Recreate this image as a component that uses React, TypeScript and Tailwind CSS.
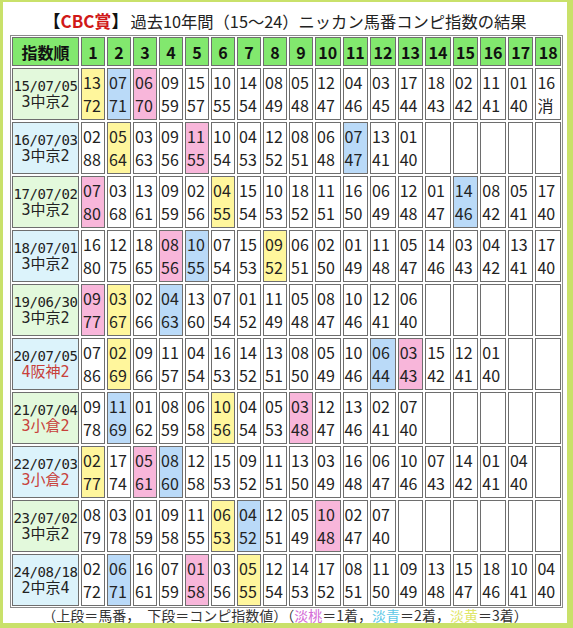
type Race = {
  date: string;
  venue: string;
  redVenue?: boolean;
  top: string;
  bot: string;
  p: number; // 1着 column
  b: number; // 2着 column
  y: number; // 3着 column
};

const races: Race[] = [
  { date: "15/07/05", venue: "3中京2", top: "13 07 06 09 15 10 14 08 05 12 04 03 17 18 02 11 01 16", bot: "72 71 70 59 57 55 54 49 48 47 46 45 44 43 42 41 40 消", p: 3, b: 2, y: 1 },
  { date: "16/07/03", venue: "3中京2", top: "02 05 03 09 11 10 04 12 08 06 07 13 01", bot: "88 64 63 56 55 54 53 52 51 48 47 41 40", p: 5, b: 11, y: 2 },
  { date: "17/07/02", venue: "3中京2", top: "07 03 13 09 02 04 15 10 18 11 16 06 12 01 14 08 05 17", bot: "80 68 61 59 56 55 54 53 52 51 50 49 48 47 46 42 41 40", p: 1, b: 15, y: 6 },
  { date: "18/07/01", venue: "3中京2", top: "16 12 18 08 10 07 15 09 06 02 01 11 05 14 03 04 13 17", bot: "80 75 65 56 55 54 53 52 51 50 49 48 47 46 43 42 41 40", p: 4, b: 5, y: 8 },
  { date: "19/06/30", venue: "3中京2", top: "09 03 02 04 13 07 01 11 05 08 10 12 06", bot: "77 67 66 63 60 54 52 49 48 47 46 41 40", p: 1, b: 4, y: 2 },
  { date: "20/07/05", venue: "4阪神2", redVenue: true, top: "07 02 09 11 04 16 14 13 08 05 10 06 03 15 12 01", bot: "86 69 66 57 54 53 52 51 50 49 46 44 43 42 41 40", p: 13, b: 12, y: 2 },
  { date: "21/07/04", venue: "3小倉2", redVenue: true, top: "09 11 01 08 06 10 04 05 03 12 13 02 07", bot: "78 69 62 59 58 56 54 53 48 47 46 41 40", p: 9, b: 2, y: 6 },
  { date: "22/07/03", venue: "3小倉2", redVenue: true, top: "02 17 05 08 12 15 09 11 13 03 16 06 10 07 14 01 04", bot: "77 74 61 60 58 53 52 51 50 49 48 47 46 43 42 41 40", p: 3, b: 4, y: 1 },
  { date: "23/07/02", venue: "3中京2", top: "08 03 01 09 11 06 04 12 05 10 02 07", bot: "79 78 59 58 55 53 52 51 49 48 47 40", p: 10, b: 7, y: 6 },
  { date: "24/08/18", venue: "2中京4", top: "02 06 16 07 01 03 05 12 14 17 08 11 09 13 15 18 10 04", bot: "72 71 61 59 58 56 55 54 53 52 51 50 49 48 47 46 41 40", p: 5, b: 2, y: 7 },
];

const cols = Array.from({ length: 18 }, (_, i) => i + 1);

function cellBg(r: Race, c: number) {
  if (c === r.p) return "bg-[#f8b6da]";
  if (c === r.b) return "bg-[#badaf8]";
  if (c === r.y) return "bg-[#fff69c]";
  return "bg-white";
}

export default function App() {
  return (
    <div className="w-[573px] h-[628px] bg-white border-[#c9e16a] border-t-2 border-l-[3px] border-r-[6px] border-b-[5px] font-['Noto_Sans_CJK_JP',sans-serif] text-[#222]">
      {/* title */}
      <div className="h-[33px] flex items-center justify-center pt-[5px] leading-[20px]">
        <span className="font-bold text-[17px] text-[#111]">【</span>
        <span className="font-bold text-[17px] text-[#d01818]">CBC賞</span>
        <span className="font-bold text-[17px] text-[#111] mr-[2px]">】</span>
        <span className="text-[16.3px]">過去10年間（15～24）ニッカン馬番コンピ指数の結果</span>
      </div>

      {/* table */}
      <div className="ml-[7px] w-[553px] border border-[#8a8a8a] p-px">
        <div className="grid grid-cols-[67px_repeat(9,24px)_repeat(9,minmax(0,1fr))] grid-rows-[29px_repeat(10,52px)] gap-[2px]">
          <div className="border border-[#6e6e6e] bg-[#82e86e] flex items-center justify-center font-bold text-[16px] text-[#111]">
            指数順
          </div>
          {cols.map((c) => (
            <div
              key={c}
              className="border border-[#6e6e6e] bg-[#82e86e] flex items-center justify-center font-bold text-[16px] text-[#111]"
            >
              {c}
            </div>
          ))}

          {races.map((r, ri) => {
            const top = r.top.split(" ");
            const bot = r.bot.split(" ");
            return [
              <div
                key={r.date}
                className={`border border-[#6e6e6e] flex flex-col items-center justify-center font-['DejaVu_Sans_Mono','Noto_Sans_CJK_JP',monospace] ${
                  ri % 2 === 0 ? "bg-[#e3f9dc]" : "bg-[#dcf3fb]"
                }`}
              >
                <div className="h-[16px] leading-[16px] text-[14px] tracking-[-0.4px] text-[#222]">{r.date}</div>
                <div className={`h-[17px] leading-[17px] text-[15px] ${r.redVenue ? "text-[#c8403a]" : "text-[#222]"}`}>
                  {r.venue}
                </div>
              </div>,
              ...cols.map((c) => (
                <div
                  key={r.date + c}
                  className={`border border-[#6e6e6e] flex flex-col justify-center pl-px text-[16px] leading-[23px] ${cellBg(r, c)}`}
                >
                  {top[c - 1] && <span>{top[c - 1]}</span>}
                  {bot[c - 1] && <span>{bot[c - 1]}</span>}
                </div>
              )),
            ];
          })}
        </div>
      </div>

      {/* legend */}
      <div className="h-[15px] flex items-center justify-center text-[14px] leading-[15px] text-[#333] whitespace-pre">
        <span>（上段＝馬番，　下段＝コンピ指数値）（</span>
        <span className="text-[#d46ad6]">淡桃</span>
        <span>＝1着，</span>
        <span className="text-[#5cc8e6]">淡青</span>
        <span>＝2着，</span>
        <span className="text-[#dfe66a]">淡黄</span>
        <span>＝3着）</span>
      </div>
    </div>
  );
}
